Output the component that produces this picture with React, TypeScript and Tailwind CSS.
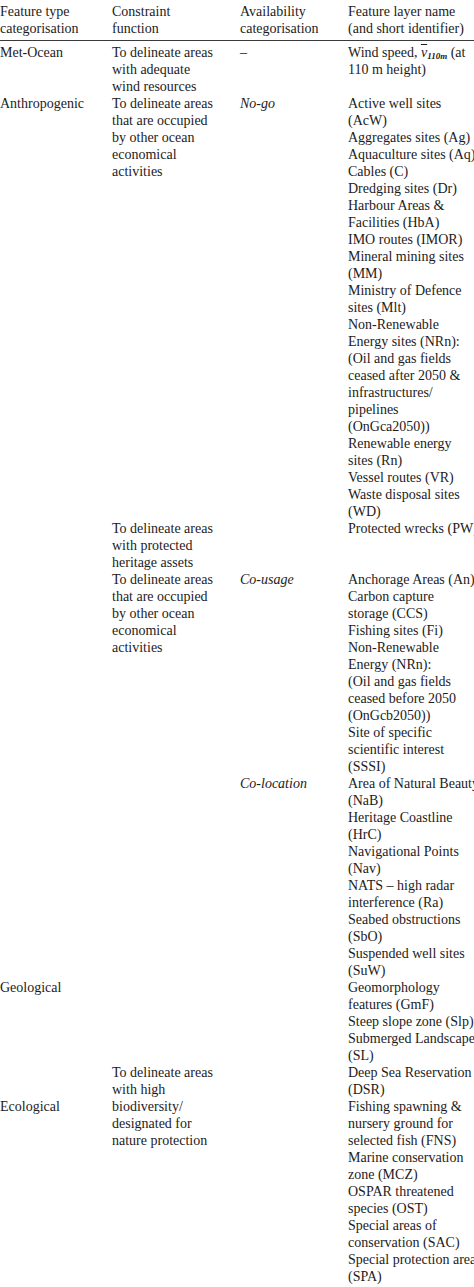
type Row = {
  type?: string[];
  fn?: string[];
  avail?: string;
  layers: React.ReactNode[];
  typeOffset?: boolean;
};

const occupied = [
  'To delineate areas',
  'that are occupied',
  'by other ocean',
  'economical',
  'activities',
];

const rows: Row[] = [
  {
    type: ['Met-Ocean'],
    fn: ['To delineate areas', 'with adequate', 'wind resources'],
    avail: '–',
    layers: [
      <>
        Wind speed,{' '}
        <span className="italic" style={{ textDecoration: 'overline' }}>
          v
        </span>
        <sub className="text-[9px] font-bold italic">110m</sub> (at
      </>,
      '110 m height)',
    ],
  },
  {
    type: ['Anthropogenic'],
    fn: occupied,
    avail: 'No-go',
    layers: [
      'Active well sites',
      '(AcW)',
      'Aggregates sites (Ag)',
      'Aquaculture sites (Aq)',
      'Cables (C)',
      'Dredging sites (Dr)',
      'Harbour Areas &',
      'Facilities (HbA)',
      'IMO routes (IMOR)',
      'Mineral mining sites',
      '(MM)',
      'Ministry of Defence',
      'sites (Mlt)',
      'Non-Renewable',
      'Energy sites (NRn):',
      '(Oil and gas fields',
      'ceased after 2050 &',
      'infrastructures/',
      'pipelines',
      '(OnGca2050))',
      'Renewable energy',
      'sites (Rn)',
      'Vessel routes (VR)',
      'Waste disposal sites',
      '(WD)',
    ],
  },
  {
    fn: ['To delineate areas', 'with protected', 'heritage assets'],
    layers: ['Protected wrecks (PW)'],
  },
  {
    fn: occupied,
    avail: 'Co-usage',
    layers: [
      'Anchorage Areas (An)',
      'Carbon capture',
      'storage (CCS)',
      'Fishing sites (Fi)',
      'Non-Renewable',
      'Energy (NRn):',
      '(Oil and gas fields',
      'ceased before 2050',
      '(OnGcb2050))',
      'Site of specific',
      'scientific interest',
      '(SSSI)',
    ],
  },
  {
    avail: 'Co-location',
    layers: [
      'Area of Natural Beauty',
      '(NaB)',
      'Heritage Coastline',
      '(HrC)',
      'Navigational Points',
      '(Nav)',
      'NATS – high radar',
      'interference (Ra)',
      'Seabed obstructions',
      '(SbO)',
      'Suspended well sites',
      '(SuW)',
    ],
  },
  {
    type: ['Geological'],
    layers: [
      'Geomorphology',
      'features (GmF)',
      'Steep slope zone (Slp)',
      'Submerged Landscape',
      '(SL)',
    ],
  },
  {
    type: ['Ecological'],
    typeOffset: true,
    fn: [
      'To delineate areas',
      'with high',
      'biodiversity/',
      'designated for',
      'nature protection',
    ],
    layers: [
      'Deep Sea Reservation',
      '(DSR)',
      'Fishing spawning &',
      'nursery ground for',
      'selected fish (FNS)',
      'Marine conservation',
      'zone (MCZ)',
      'OSPAR threatened',
      'species (OST)',
      'Special areas of',
      'conservation (SAC)',
      'Special protection area',
      '(SPA)',
    ],
  },
];

function Lines({ items }: { items?: React.ReactNode[] }) {
  return (
    <div className="flex flex-col">
      {items?.map((l, i) => (
        <div key={i} className="whitespace-nowrap">
          {l}
        </div>
      ))}
    </div>
  );
}

export default function App() {
  return (
    <div
      className="w-[474px] h-[1287px] overflow-hidden bg-white text-[14px] leading-[17px] text-[#1d1b1c]"
      style={{ fontFamily: '"Liberation Serif", "Times New Roman", serif' }}
    >
      {/* Header */}
      <div className="grid grid-cols-[112px_128px_108px_126px] pt-[3px] pb-[3px]">
        <Lines items={['Feature type', 'categorisation']} />
        <Lines items={['Constraint', 'function']} />
        <Lines items={['Availability', 'categorisation']} />
        <Lines items={['Feature layer name', '(and short identifier)']} />
      </div>
      <div className="h-px bg-[#3a3a3a]" />

      {/* Body */}
      <div className="pt-[3px]">
        {rows.map((r, i) => (
          <div key={i} className="grid grid-cols-[112px_128px_108px_126px]">
            <div className={r.typeOffset ? 'pt-[34px]' : ''}>
              <Lines items={r.type} />
            </div>
            <Lines items={r.fn} />
            <div className="italic">
              <Lines items={r.avail ? [r.avail] : []} />
            </div>
            <Lines items={r.layers} />
          </div>
        ))}
      </div>
    </div>
  );
}
